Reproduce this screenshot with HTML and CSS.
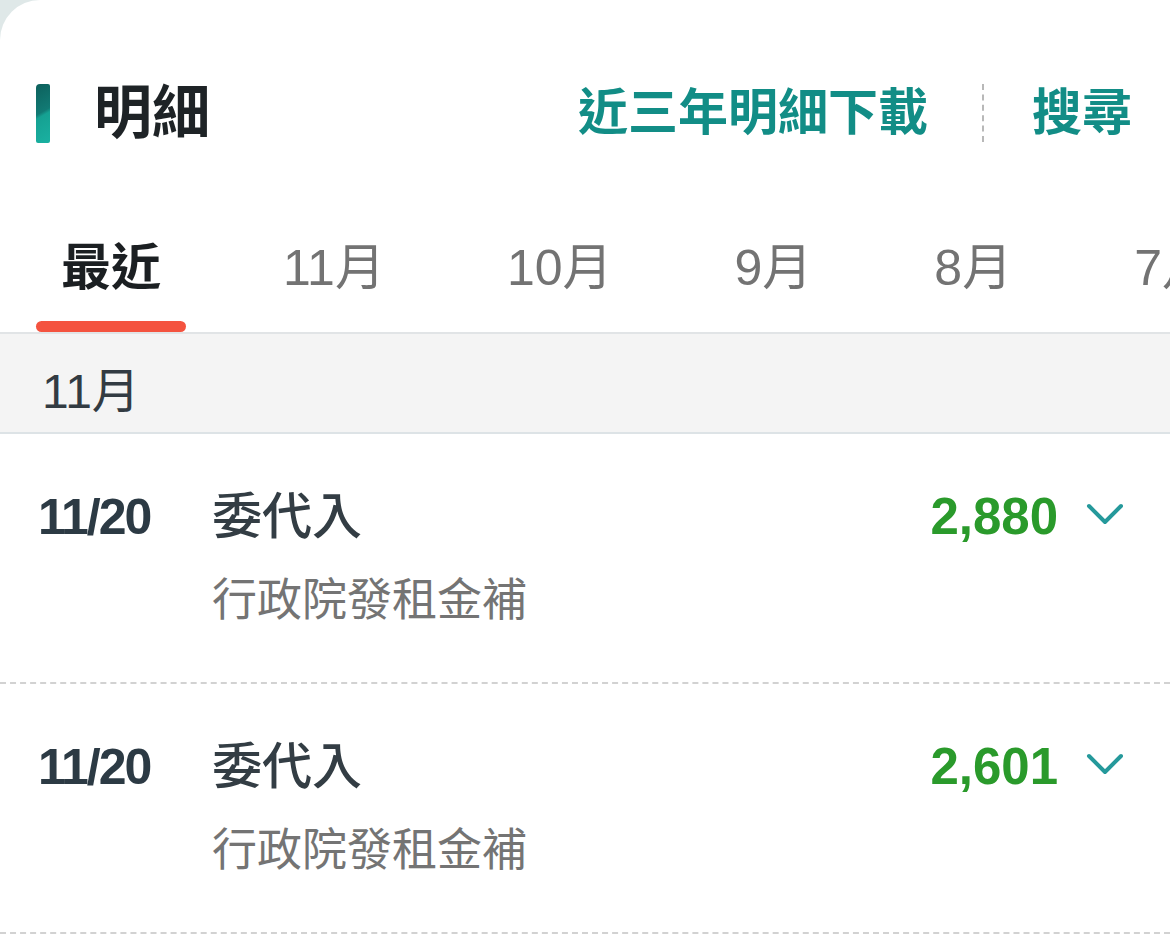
FILE: index.html
```html
<!DOCTYPE html>
<html lang="zh-Hant">
<head>
    <meta charset="UTF-8">
    <meta name="viewport" content="width=device-width, initial-scale=1.0">
    <title>明細</title>
    <link rel="stylesheet" href="styles.css">
</head>
<body>
    <div class="card">
        <!-- Title row -->
        <header class="head">
            <span class="accent"></span>
            <h1 class="title">明細</h1>
            <a class="link" href="#">近三年明細下載</a>
            <span class="sep"></span>
            <a class="link" href="#">搜尋</a>
        </header>

        <!-- Month tabs -->
        <nav class="tabs">
            <div class="tab active">最近</div>
            <div class="tab">11月</div>
            <div class="tab">10月</div>
            <div class="tab">9月</div>
            <div class="tab">8月</div>
            <div class="tab">7月</div>
        </nav>

        <div class="month">11月</div>

        <!-- Transactions -->
        <ul class="list">
            <li class="item">
                <div class="main">
                    <span class="date">11/20</span>
                    <span class="name">委代入</span>
                    <span class="amount">2,880</span>
                    <svg class="chevron" viewBox="0 0 38 24" width="38" height="24">
                        <polyline points="3,3 19,19 35,3" fill="none" stroke="#25999b" stroke-width="4" stroke-linecap="round" stroke-linejoin="round"/>
                    </svg>
                </div>
                <div class="memo">行政院發租金補</div>
            </li>
            <li class="item">
                <div class="main">
                    <span class="date">11/20</span>
                    <span class="name">委代入</span>
                    <span class="amount">2,601</span>
                    <svg class="chevron" viewBox="0 0 38 24" width="38" height="24">
                        <polyline points="3,3 19,19 35,3" fill="none" stroke="#25999b" stroke-width="4" stroke-linecap="round" stroke-linejoin="round"/>
                    </svg>
                </div>
                <div class="memo">行政院發租金補</div>
            </li>
        </ul>
    </div>
</body>
</html>
```

FILE: styles.css
```css
body {
    font-family: "Liberation Sans", "Noto Sans CJK TC", sans-serif;
    background-color: #dfe8e8;
    color: #333d44;
    margin: 0;
    padding: 0;
}
.card {
    background-color: #fff;
    border-top-left-radius: 40px;
    min-height: 100vh;
    overflow: hidden;
}
.head {
    display: flex;
    align-items: center;
    height: 66px;
    padding: 80px 38px 0 36px;
}
.accent {
    width: 14px;
    height: 59px;
    border-radius: 4px 2px 2px 2px;
    background: linear-gradient(150deg, #0d605c 0%, #117a74 47%, #15a192 53%, #1ab1a1 100%);
}
.title {
    margin: 0 auto 0 44px;
    font-size: 58px;
    font-weight: 700;
    color: #1e2326;
    line-height: 66px;
}
.link {
    font-size: 50px;
    font-weight: 700;
    color: #128d86;
    text-decoration: none;
    line-height: 66px;
}
.sep {
    width: 0;
    height: 58px;
    margin: 0 48px 0 54px;
    border-left: 2px dashed #b8b8b8;
}
.tabs {
    display: flex;
    gap: 72px;
    margin-top: 92px;
    padding-left: 36px;
    border-bottom: 2px solid #e1e4e6;
    white-space: nowrap;
}
.tab {
    flex-shrink: 0;
    padding: 0 25px;
    font-size: 50px;
    line-height: 60px;
    color: #737373;
}
.tab::after {
    content: "";
    display: block;
    height: 11px;
    margin: 23px -25px 0;
    border-radius: 6px;
}
.tab.active {
    font-weight: 700;
    color: #1b1f22;
}
.tab.active::after {
    background-color: #f4533f;
}
.month {
    background-color: #f4f4f4;
    border-bottom: 2px solid #dde3e6;
    padding: 30px 42px 12px;
    font-size: 48px;
    line-height: 56px;
    color: #323b42;
}
.list {
    list-style: none;
    margin: 0;
    padding: 0;
}
.item {
    padding: 58px 46px 53px 38px;
    border-bottom: 2px dashed #d2d2d2;
}
.main {
    display: flex;
    align-items: baseline;
    height: 50px;
    line-height: 50px;
}
.date {
    width: 174px;
    flex-shrink: 0;
    font-size: 50px;
    font-weight: 700;
    letter-spacing: -2px;
    color: #2c3a44;
}
.name {
    font-size: 50px;
    font-weight: 500;
    color: #333d44;
    margin-right: auto;
}
.amount {
    font-size: 51px;
    font-weight: 700;
    color: #2a9a2b;
}
.chevron {
    align-self: center;
    margin: 0 0 4px 28px;
}
.memo {
    margin: 31px 0 0 174px;
    font-size: 45px;
    line-height: 56px;
    color: #747474;
}
```
